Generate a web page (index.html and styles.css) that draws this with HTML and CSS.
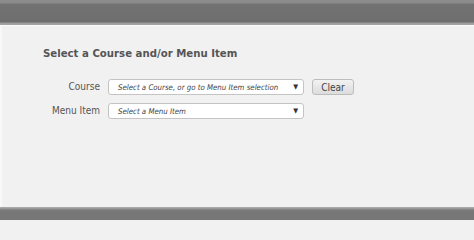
FILE: index.html
```html
<!DOCTYPE html>
<html>
<head>
<meta charset="utf-8">
<link rel="stylesheet" href="styles.css">
</head>
<body>
<div class="page">
  <header class="topbar"></header>
  <main class="content">
    <h1 class="title">Select a Course and/or Menu Item</h1>
    <div class="form">
      <label class="lbl">Course</label>
      <div class="field">
        <div class="select"><span class="ph">Select a Course, or go to Menu Item selection</span><span class="arrow">▼</span></div>
        <button class="btn">Clear</button>
      </div>
      <label class="lbl">Menu Item</label>
      <div class="field">
        <div class="select"><span class="ph">Select a Menu Item</span><span class="arrow">▼</span></div>
      </div>
    </div>
  </main>
  <footer class="botbar"></footer>
</div>
</body>
</html>
```
FILE: styles.css
```css
html, body { margin: 0; padding: 0; }
body {
  width: 474px; height: 220px; overflow: hidden;
  font-family: "DejaVu Sans Condensed", "DejaVu Sans", sans-serif;
  background: #f1f1f1;
}
.page { display: flex; flex-direction: column; height: 220px; }
.topbar {
  height: 26px; flex: none; box-sizing: border-box;
  background: linear-gradient(#8c8c8c 0, #8c8c8c 3px, #727272 4px, #6e6e6e 22px, #9a9a9a 23px, #a5a5a5 25px, #fafafa 25px, #fafafa 26px);
}
.content {
  flex: 1; box-sizing: border-box;
  padding: 20px 0 0 41px;
  border-left: 2px solid #f8f8f8;
}
.title {
  margin: 0; font-size: 11.3px; font-weight: bold; color: #555;
  line-height: 15px;
}
.form {
  margin-top: 18px; margin-left: -41px;
  display: grid; grid-template-columns: 98px auto; column-gap: 8px; row-gap: 8px;
  align-items: center; justify-content: start;
}
.lbl { font-size: 10px; color: #555; text-align: right; line-height: 16px; }
.field { display: flex; align-items: center; gap: 8px; }
.select {
  width: 196px; height: 16px; box-sizing: border-box;
  border: 1px solid #c4c4c4; border-radius: 3px; background: #fff;
  display: flex; align-items: center; justify-content: space-between;
  padding: 0 5px 0 9px;
}
.ph { font-size: 7.8px; font-style: italic; color: #444; white-space: nowrap; }
.arrow { font-size: 7px; color: #333; }
.btn {
  width: 42px; height: 16px; box-sizing: border-box; padding: 0;
  border: 1px solid #bdbdbd; border-radius: 3px;
  background: linear-gradient(#f2f2f2, #dcdcdc);
  font-family: "DejaVu Sans Condensed", "DejaVu Sans", sans-serif;
  font-size: 10px; color: #444;
}
.botbar {
  height: 13px; flex: none;
  background: linear-gradient(#a8a8a8 0, #a8a8a8 1px, #8a8a8a 2px, #777 4px, #777 13px);
}
```
